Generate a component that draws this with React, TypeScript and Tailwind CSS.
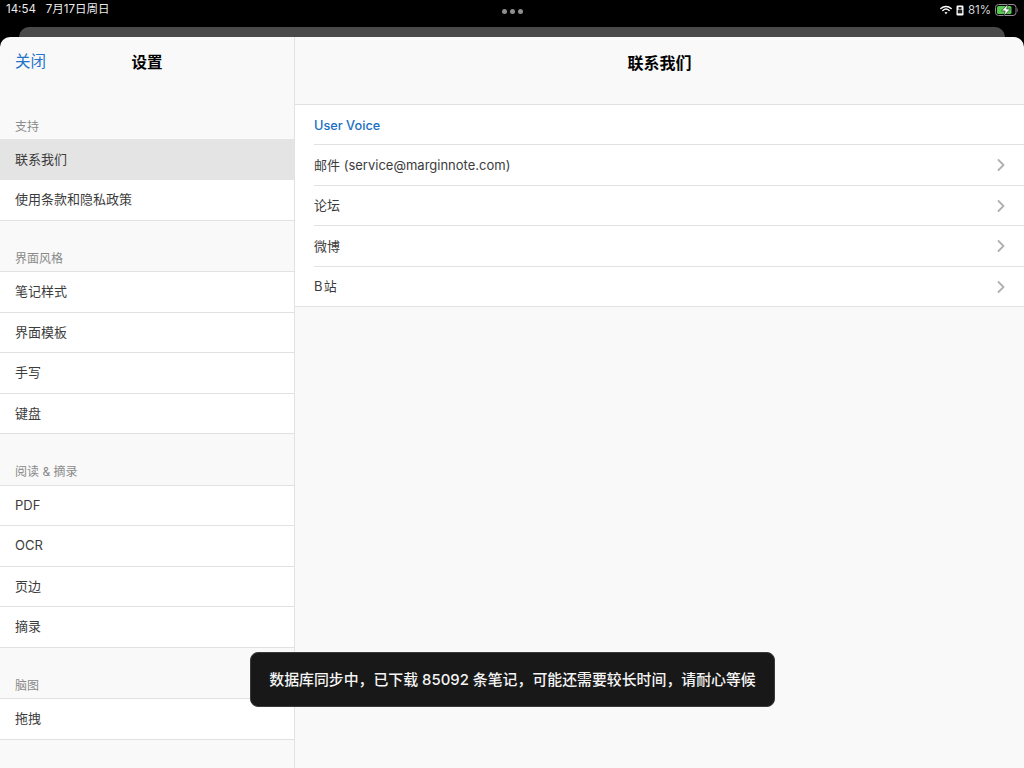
function Chevron() {
  return (
    <svg width="10" height="14" viewBox="0 0 10 14" fill="none" className="shrink-0">
      <path d="M2.5 2 L7.5 7 L2.5 12" stroke="#b0b0b0" strokeWidth="1.8" strokeLinecap="round" strokeLinejoin="round" />
    </svg>
  );
}

function Wifi() {
  return (
    <svg width="12" height="10" viewBox="0 0 14 11" fill="none">
      <path d="M1 3.8 C4.4 0.6 9.6 0.6 13 3.8" stroke="#fff" strokeWidth="1.7" strokeLinecap="round" />
      <path d="M3.3 6.1 C5.4 4.2 8.6 4.2 10.7 6.1" stroke="#fff" strokeWidth="1.7" strokeLinecap="round" />
      <path d="M7 10.5 L5.2 8.4 C6.2 7.6 7.8 7.6 8.8 8.4 Z" fill="#fff" />
    </svg>
  );
}

function Lock() {
  return (
    <svg width="8" height="11" viewBox="0 0 8 11">
      <rect x="0.5" y="0.5" width="7" height="10" rx="1.2" fill="#fff" />
      <rect x="2.5" y="2" width="3" height="2.4" fill="#222" />
      <rect x="1.8" y="4.8" width="4.4" height="3.6" fill="#222" />
    </svg>
  );
}

function Battery() {
  return (
    <svg width="24" height="12" viewBox="0 0 24 12" fill="none">
      <rect x="0.5" y="0.5" width="20.5" height="11" rx="3" stroke="#8f8f8f" />
      <rect x="2" y="2" width="14.5" height="8" rx="1.5" fill="#55c84e" />
      <path d="M22.3 4 C23.2 4.4 23.2 7.6 22.3 8 Z" fill="#8f8f8f" />
      <path d="M13 0 L6.5 6.9 L10.2 6.9 L8.8 12 L15.3 5 L11.6 5 Z" fill="#fff" stroke="#000" strokeWidth="0.5" />
    </svg>
  );
}

function Section({ title, items }: { title: string; items: string[] }) {
  return (
    <div>
      <div className="h-[50.5px] pl-[15px] pt-[29px] text-[12px] leading-[18px] text-[#8a8a8a]">{title}</div>
      <div className="border-t border-[#e2e2e2] bg-white">
        {items.map((t) => (
          <div key={t} className="flex h-[40.5px] items-center border-b border-[#e2e2e2] pl-[15px] text-[13px] text-[#3c3c3c]">
            {t}
          </div>
        ))}
      </div>
    </div>
  );
}

export default function App() {
  const stack = { fontFamily: 'Inter, "Noto Sans CJK SC", sans-serif' };
  return (
    <div style={stack} className="relative flex h-[768px] w-[1024px] flex-col overflow-hidden bg-black">
      <div className="relative flex h-[27px] shrink-0 items-start justify-between pl-[6px] pr-[5px] pt-[2px] text-[11.5px] leading-[14px] text-[#ececec]">
        <div className="flex gap-[10px]">
          <span>14:54</span>
          <span>7月17日周日</span>
        </div>
        <div className="absolute left-[502px] top-[9px] flex gap-[3px]">
          <span className="h-[5px] w-[5px] rounded-full bg-[#8e8e8e]" />
          <span className="h-[5px] w-[5px] rounded-full bg-[#8e8e8e]" />
          <span className="h-[5px] w-[5px] rounded-full bg-[#8e8e8e]" />
        </div>
        <div className="flex items-center gap-[4px] pt-[1px]">
          <Wifi />
          <Lock />
          <span className="text-[#d8d8d8]">81%</span>
          <Battery />
        </div>
      </div>
      <div className="mx-[19px] h-[10px] shrink-0 rounded-t-[10px] bg-[#4a4a4a]" />
      <div className="flex min-h-0 flex-1 overflow-hidden rounded-t-[10px] bg-[#f9f9f9]">
        <div className="w-[295px] shrink-0 border-r border-[#e2e2e2]">
          <div className="relative flex h-[51px] items-center justify-center">
            <span className="absolute left-[15px] top-[14px] text-[15.5px] leading-[22px] text-[#2273c9]">关闭</span>
            <span className="text-[15.5px] font-semibold leading-[22px] text-black">设置</span>
          </div>
          <div>
            <div className="h-[51px] pl-[15px] pt-[30px] text-[12px] leading-[18px] text-[#8a8a8a]">支持</div>
            <div className="flex h-[40.5px] items-center bg-[#e4e4e4] pl-[15px] text-[13px] text-[#3c3c3c]">联系我们</div>
            <div className="flex h-[41px] items-center border-b border-[#e2e2e2] bg-white pl-[15px] pt-px text-[13px] text-[#3c3c3c]">使用条款和隐私政策</div>
          </div>
          <Section title="界面风格" items={["笔记样式", "界面模板", "手写", "键盘"]} />
          <Section title="阅读 & 摘录" items={["PDF", "OCR", "页边", "摘录"]} />
          <Section title="脑图" items={["拖拽"]} />
        </div>
        <div className="min-w-0 flex-1">
          <div className="flex h-[51px] items-center justify-center text-[16px] font-semibold text-black">联系我们</div>
          <div className="mt-[16px] border-t border-[#e2e2e2] bg-white">
            <div className="ml-[19px] flex h-[40px] items-center border-b border-[#e2e2e2] pt-[2px] text-[12.75px] font-medium text-[#1a6fc4]">User Voice</div>
            {["邮件 (service@marginnote.com)", "论坛", "微博", "B\u200a站"].map((t, i) => (
              <div
                key={t}
                className={
                  i === 3
                    ? "flex h-[40.5px] items-center justify-between border-b border-[#e2e2e2] pl-[19px] pr-[18px] pt-px text-[13px] text-[#3c3c3c]"
                    : "ml-[19px] flex h-[40.5px] items-center justify-between border-b border-[#e2e2e2] pr-[18px] pt-px text-[13px] text-[#3c3c3c]"
                }
              >
                <span>{t}</span>
                <Chevron />
              </div>
            ))}
          </div>
        </div>
      </div>
      <div className="absolute left-[250px] top-[652px] flex h-[55px] w-[525px] items-center justify-center rounded-[8px] border border-[#3a3a3a] bg-[#181818] pt-px text-[14.9px] font-medium text-[#f4f4f4]">
        数据库同步中，已下载 85092 条笔记，可能还需要较长时间，请耐心等候
      </div>
    </div>
  );
}
